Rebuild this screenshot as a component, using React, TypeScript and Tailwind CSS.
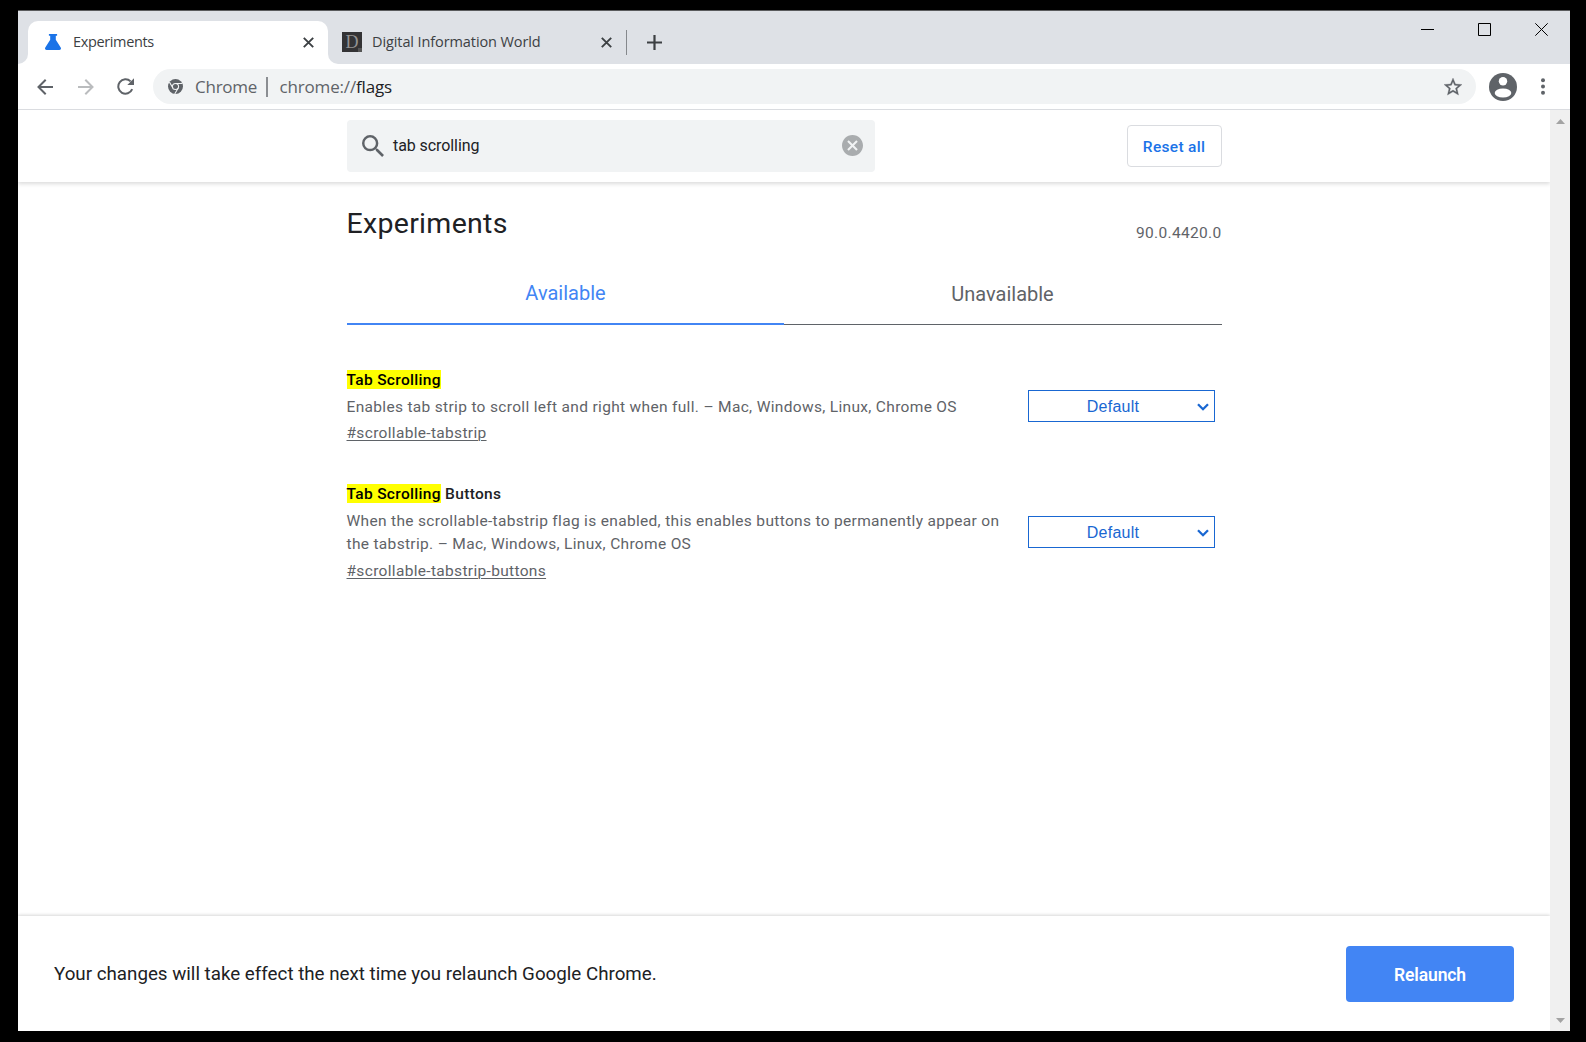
import type { ReactNode } from "react";

const TabClose = () => (
  <svg className="h-[11px] w-[11px] shrink-0" viewBox="0 0 11 11" fill="none" stroke="#3c4043" strokeWidth="1.9">
    <path d="M.8.8l9.4 9.4M10.2.8L.8 10.2" />
  </svg>
);

const Flask = () => (
  <svg className="h-4 w-4 shrink-0" viewBox="0 0 16 16" fill="#1a73e8">
    <path d="M3.9 0h8.2v1.7h-1.3v4l4.9 7.9c.7 1.2.1 2.4-1.3 2.4H1.6C.2 16-.4 14.8.3 13.6L5.2 5.7v-4H3.9z" />
  </svg>
);

function TabStrip() {
  return (
    <div className="flex h-[53px] shrink-0 bg-[#dee1e6] font-['Open_Sans',sans-serif] text-[14.5px] text-[#3c4043]">
      <div className="w-[10px] bg-white">
        <div className="h-full rounded-br-[10px] bg-[#dee1e6]" />
      </div>
      <div className="mt-[10px] flex h-[43px] w-[300px] items-center rounded-t-[10px] bg-white pb-px pl-[17px] pr-[14px]">
        <Flask />
        <span className="-mt-px ml-[12px] flex-1 tracking-[-0.36px]">Experiments</span>
        <TabClose />
      </div>
      <div className="w-[10px] bg-white">
        <div className="h-full rounded-bl-[10px] bg-[#dee1e6]" />
      </div>
      <div className="mt-[10px] flex h-[43px] w-[289px] items-center pb-px pl-[4px]">
        <div className="relative flex h-5 w-5 items-center justify-center bg-[#333335] font-['Liberation_Serif',serif] text-[18px] leading-5 text-[#929292]">
          D
          <span className="absolute bottom-0 right-0 h-1 w-1 bg-[#555]" />
        </div>
        <span className="-mt-px ml-[10px] flex-1 tracking-[-0.1px]">Digital Information World</span>
        <span className="mr-[14px]"><TabClose /></span>
        <span className="h-[25px] w-px bg-[#85888c]" />
      </div>
      <svg className="ml-[20px] mt-[24px] h-[15px] w-[15px]" viewBox="0 0 15 15" stroke="#3c4043" strokeWidth="2.2">
        <path d="M7.5 0v15M0 7.5h15" />
      </svg>
      <div className="ml-auto mr-[22px] mt-[12px] flex gap-[44px]">
        <svg className="h-[13px] w-[13px]" viewBox="0 0 13 13" stroke="#000"><path d="M0 6.5h13" /></svg>
        <svg className="h-[13px] w-[13px]" viewBox="0 0 13 13" stroke="#000" fill="none"><path d="M.5.5h12v12H.5z" /></svg>
        <svg className="h-[13px] w-[13px]" viewBox="0 0 13 13" stroke="#000" fill="none"><path d="M.3.3l12.4 12.4M12.7.3L.3 12.7" /></svg>
      </div>
    </div>
  );
}

function Toolbar() {
  return (
    <div className="flex h-[46px] shrink-0 items-center border-b border-[#dadce0] bg-white pl-[19px] font-['Open_Sans',sans-serif] text-[17px]">
      <svg className="h-4 w-4" viewBox="0 0 16 16" fill="none" stroke="#5f6368" strokeWidth="2"><path d="M16 8H1.5M8.7.8L1.5 8l7.2 7.2" /></svg>
      <svg className="ml-[25px] h-4 w-4" viewBox="0 0 16 16" fill="none" stroke="#babcbe" strokeWidth="2"><path d="M0 8h14.500M7.3.8L14.5 8l-7.2 7.2" /></svg>
      <svg className="ml-[23px] mr-px h-[17px] w-[17px]" viewBox="0 0 17 17">
        <path d="M15.2 11.2A7.2 7.2 0 1 1 13.6 3.4" fill="none" stroke="#5f6368" strokeWidth="2" />
        <path d="M17 .3V7h-6.7z" fill="#5f6368" />
      </svg>
      <div className="ml-[18px] flex h-[35px] w-[1323px] items-center rounded-full bg-[#f1f3f4] pl-[15px] pr-[14px] text-[#5f6368]">
        <svg className="h-[15px] w-[15px] shrink-0" viewBox="0 0 24 24">
          <circle cx="12" cy="12" r="12" fill="#5f6368" />
          <circle cx="12" cy="12" r="4.9" fill="none" stroke="#f1f3f4" strokeWidth="1.7" />
          <path d="M12 7.1h11M7.8 14.4L2.3 5M16.2 14.4L10.8 24" stroke="#f1f3f4" strokeWidth="1.7" />
        </svg>
        <span className="ml-[12px] w-[71px] tracking-[-0.25px]">Chrome</span>
        <span className="h-5 w-[1.5px] bg-[#8b8e92]" />
        <span className="ml-[12px] flex-1 tracking-[-0.16px]">chrome://<span className="text-[#202124]">flags</span></span>
        <svg className="h-[18px] w-[18px]" viewBox="2 2 20 20" fill="#5f6368" stroke="#5f6368" strokeWidth="0.3">
          <path d="M22 9.24l-7.19-.62L12 2 9.19 8.63 2 9.24l5.46 4.73L5.82 21 12 17.27 18.18 21l-1.63-7.03L22 9.24zM12 15.4l-3.76 2.27 1-4.28-3.32-2.88 4.38-.38L12 6.1l1.71 4.04 4.38.38-3.32 2.88 1 4.28L12 15.4z" />
        </svg>
      </div>
      <svg className="ml-[13px] h-7 w-7" viewBox="0 0 28 28">
        <circle cx="14" cy="14" r="14" fill="#5f6368" />
        <circle cx="14" cy="8.3" r="4.2" fill="#fff" />
        <ellipse cx="14" cy="20" rx="8.3" ry="4.5" fill="#fff" />
      </svg>
      <svg className="ml-[24px] h-[17px] w-1" viewBox="0 0 4 17" fill="#5f6368">
        <circle cx="2" cy="2.2" r="2" /><circle cx="2" cy="8.5" r="2" /><circle cx="2" cy="14.8" r="2" />
      </svg>
    </div>
  );
}

function Mark({ children }: { children: ReactNode }) {
  return <mark className="bg-[#ff0] pt-px text-black">{children}</mark>;
}

type ExperimentProps = { title: ReactNode; description: string; link: string; className: string };

function Experiment({ title, description, link, className }: ExperimentProps) {
  return (
    <div className={className}>
      <div className="w-[660px] pt-px text-[#5f6368]">
        <h3 className="h-[23px] font-medium leading-[23px] text-[#202124]">{title}</h3>
        <p className="mt-[4px] leading-[23px]">{description}</p>
        <p className="leading-[23px]"><a className="underline decoration-1 underline-offset-2">{link}</a></p>
      </div>
      <div className="mr-[7px] flex h-8 w-[187px] items-center border border-[#1967d2] pr-[5px] font-['Liberation_Sans',sans-serif] text-[16px] tracking-[0.25px] text-[#1967d2]">
        <span className="w-[171px] pl-px pt-px text-center leading-5">Default</span>
        <svg className="mt-px h-[8px] w-[12px] shrink-0" viewBox="0 0 12 8" fill="none" stroke="#1967d2" strokeWidth="2.3"><path d="M1 1.2l5 5 5-5" /></svg>
      </div>
    </div>
  );
}

function FlagsPage() {
  return (
    <div className="flex min-w-0 flex-1 flex-col text-[15.5px] tracking-[0.325px] text-[#202124]">
      <header className="relative flex h-[72px] shrink-0 items-center bg-white pl-[329px] pr-[328px] shadow-[0_2px_4px_rgba(0,0,0,0.14)]">
        <div className="flex h-[52px] w-[528px] items-center rounded-[4px] bg-[#f1f3f4] pl-[15px] pr-[12px]">
          <svg className="mb-px h-[22px] w-[22px]" viewBox="3 3 17.5 17.5" fill="#5f6368">
            <path d="M15.5 14h-.79l-.28-.27A6.471 6.471 0 0 0 16 9.5 6.5 6.5 0 1 0 9.5 16c1.61 0 3.09-.59 4.23-1.57l.27.28v.79l5 4.99L20.49 19l-4.99-5zm-6 0C7.01 14 5 11.99 5 9.5S7.01 5 9.5 5 14 7.01 14 9.5 11.99 14 9.5 14z" />
          </svg>
          <span className="ml-[9px] flex-1 text-[16px] tracking-[-0.08px]">tab scrolling</span>
          <svg className="mb-px h-[21px] w-[21px]" viewBox="2 2 20 20" fill="#a9acae">
            <path d="M12 2C6.47 2 2 6.47 2 12s4.47 10 10 10 10-4.47 10-10S17.53 2 12 2zm5 13.59L15.59 17 12 13.41 8.41 17 7 15.59 10.59 12 7 8.41 8.41 7 12 10.59 15.59 7 17 8.41 13.41 12 17 15.59z" />
          </svg>
        </div>
        <button className="ml-auto h-[42px] w-[95px] rounded-[4px] border border-[#dadce0] pr-px pt-px text-center font-medium leading-[24px] tracking-[0.3px] text-[#1a73e8]">Reset all</button>
      </header>

      <main className="mx-auto w-[875px] flex-1">
        <div className="flex h-[86px] items-start justify-between">
          <h1 className="mt-[25px] text-[28.5px] leading-[34px] tracking-[0.3px]">Experiments</h1>
          <span className="mt-[41px] leading-5 text-[#5f6368]">90.0.4420.0</span>
        </div>
        <div className="flex h-[57px] items-end text-center text-[20px] leading-6 tracking-normal">
          <div className="h-[57px] w-[437px] border-b-2 border-[#4285f4] pl-px pt-[13px] text-[#4285f4]">Available</div>
          <div className="h-[57px] w-[438px] border-b border-[#5f6368] pt-[14px] text-[#5f6368]">Unavailable</div>
        </div>
        <Experiment
          className="mt-[43px] flex h-[76px] justify-between [&>div+div]:mt-[22px] [&_p+p]:mt-[3px]"
          title={<Mark>Tab Scrolling</Mark>}
          description="Enables tab strip to scroll left and right when full. – Mac, Windows, Linux, Chrome OS"
          link="#scrollable-tabstrip"
        />
        <Experiment
          className="mt-[38px] flex h-[100px] justify-between [&>div+div]:mt-[34px] [&_p+p]:mt-[4px]"
          title={<><Mark>Tab Scrolling</Mark> Buttons</>}
          description="When the scrollable-tabstrip flag is enabled, this enables buttons to permanently appear on the tabstrip. – Mac, Windows, Linux, Chrome OS"
          link="#scrollable-tabstrip-buttons"
        />
      </main>

      <footer className="flex h-[115px] shrink-0 items-center justify-between bg-white pl-[36px] pr-[36px] tracking-normal shadow-[0_-1px_3px_rgba(0,0,0,0.16)]">
        <p className="mt-px text-[18.75px]">Your changes will take effect the next time you relaunch Google Chrome.</p>
        <button className="h-14 w-[168px] rounded-[4px] bg-[#4285f4] pt-[3px] text-[17.5px] font-semibold tracking-[-0.12px] text-white">Relaunch</button>
      </footer>
    </div>
  );
}

export default function App() {
  return (
    <div className="h-[1042px] w-[1586px] overflow-hidden bg-black pl-[18px] pt-[10px] font-['Roboto',sans-serif]">
      <div className="flex h-[1021px] w-[1552px] flex-col border-t border-[#5a5b5d] bg-white">
        <TabStrip />
        <Toolbar />
        <div className="flex min-h-0 flex-1 overflow-hidden">
          <FlagsPage />
          <div className="relative flex w-5 flex-col items-center justify-between bg-[#f0f0f0] pb-[8px] pt-[9px]">
            <svg className="ml-px h-[5px] w-[9px]" viewBox="0 0 10 5" preserveAspectRatio="none" fill="#a3a3a3"><path d="M5 0l5 5H0z" /></svg>
            <svg className="ml-px h-[5px] w-[9px]" viewBox="0 0 10 5" preserveAspectRatio="none" fill="#a3a3a3"><path d="M0 0h10L5 5z" /></svg>
          </div>
        </div>
      </div>
    </div>
  );
}
